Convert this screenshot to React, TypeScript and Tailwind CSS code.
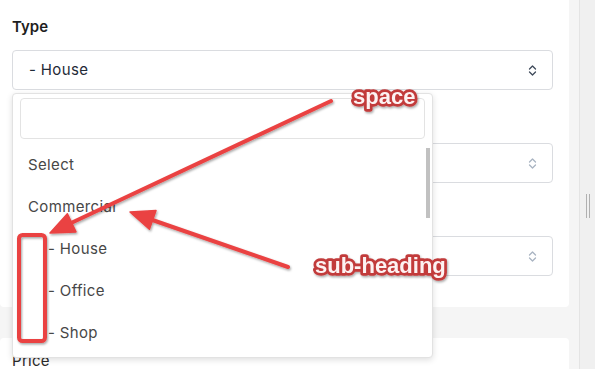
import React from "react";

const Chevrons = ({ color }: { color: string }) => (
  <svg width="9" height="13" viewBox="0 0 9 13" fill="none" stroke={color} strokeWidth="1.3" strokeLinecap="round" strokeLinejoin="round">
    <path d="M1.5 5 L4.5 2 L7.5 5" />
    <path d="M1.5 8 L4.5 11 L7.5 8" />
  </svg>
);

const SelectBox = ({ value, color }: { value: string; color: string }) => (
  <div className="mt-3 h-10 border border-[#dadce0] rounded-[4px] flex items-center justify-between pl-4 pr-[15px] bg-white">
    <span className="text-[15px] text-[#1f2a37] tracking-[0.35px]">{value}</span>
    <Chevrons color={color} />
  </div>
);

const Label = ({ children }: { children: React.ReactNode }) => (
  <div className="h-[22px] leading-[22px] text-[15px] font-semibold text-[#1e1e1e]">{children}</div>
);

const options: { text: string; sub?: boolean }[] = [
  { text: "Select" },
  { text: "Commercial" },
  { text: "- House", sub: true },
  { text: "- Office", sub: true },
  { text: "- Shop", sub: true },
  { text: "Residential" },
];

export default function App() {
  return (
    <div className="relative w-[595px] h-[369px] overflow-hidden bg-[#f5f5f5] flex font-['Inter',sans-serif]">
      <div className="w-[569px] flex flex-col">
        <div className="bg-white rounded-b-[4px] pt-4 pl-3 pr-4 pb-[31px]">
          <div className="relative">
            <Label>Type</Label>
            <SelectBox value="- House" color="#3f4a5a" />
            <div className="absolute z-10 left-0 top-[calc(100%+3px)] w-[421px] h-[265px] bg-white border border-[#e2e2e2] rounded-[4px] shadow-[0_2px_6px_rgba(0,0,0,0.13)] overflow-hidden">
              <div className="pt-1 px-[7px]">
                <div className="h-[41px] border border-[#e3e3e3] rounded-[4px] bg-white" />
              </div>
              <div className="mt-[5px]">
                {options.map((o) => (
                  <div
                    key={o.text}
                    className={
                      "h-[42px] flex items-center text-[15px] text-[#474747] tracking-[0.35px] " +
                      (o.sub ? "pl-[35px]" : "pl-[15px]")
                    }
                  >
                    {o.text}
                  </div>
                ))}
              </div>
              <div className="absolute left-[413px] top-[54px] w-[4px] h-[70px] bg-[#c1c1c1]" />
            </div>
          </div>
          <div className="mt-[19px]">
            <Label>Status</Label>
            <SelectBox value="Select" color="#a9b4c2" />
          </div>
          <div className="mt-[19px]">
            <Label>Location</Label>
            <SelectBox value="Select" color="#a9b4c2" />
          </div>
        </div>
        <div className="mt-[31px] flex-1 bg-white rounded-t-[4px] pt-3 px-3">
          <div className="h-[22px] leading-[22px] text-[15px] font-normal text-[#2a2a2a] tracking-[0.3px]">Price</div>
        </div>
      </div>
      <div className="w-[10px] bg-[#f5f5f5]" />
      <div className="flex-1 bg-[#f0f0f0] border-l border-[#e4e4e4] flex justify-center">
        <div className="mt-[194px] h-[24px] flex gap-[2px]">
          <div className="w-[1px] h-full bg-[#b0b0b0]" />
          <div className="w-[1px] h-full bg-[#b0b0b0]" />
        </div>
      </div>

      <svg className="absolute inset-0 z-20 pointer-events-none" width="595" height="369" viewBox="0 0 595 369">
        <defs>
          <filter id="sh" x="-10%" y="-10%" width="120%" height="130%">
            <feDropShadow dx="1" dy="1.5" stdDeviation="0.8" floodColor="#000" floodOpacity="0.35" />
          </filter>
        </defs>
        <g filter="url(#sh)">
          <line x1="331" y1="101" x2="70" y2="223.5" stroke="#ea4343" strokeWidth="4" strokeLinecap="round" />
          <polygon points="50,233 76,231.9 67.4,213.7" fill="#ea4343" stroke="#ea4343" strokeWidth="1.5" strokeLinejoin="round" />
          <line x1="288" y1="267" x2="151" y2="219.5" stroke="#ea4343" strokeWidth="4" strokeLinecap="round" />
          <polygon points="130,212 156,210.5 149.4,229.3" fill="#ea4343" stroke="#ea4343" strokeWidth="1.5" strokeLinejoin="round" />
          <rect x="19" y="235" width="26" height="106" rx="3.5" fill="none" stroke="#ea4343" strokeWidth="4" />
        </g>
        <g filter="url(#sh)" fontFamily="'Liberation Sans', Arial, sans-serif" fontWeight="700" fontSize="22">
          <text x="353" y="104" fill="#fdf2f2" stroke="#c23b3b" strokeWidth="5.5" strokeLinejoin="round" style={{ paintOrder: "stroke" }}>
            space
          </text>
          <text x="315" y="273" fill="#fdf2f2" stroke="#c23b3b" strokeWidth="5.5" strokeLinejoin="round" style={{ paintOrder: "stroke" }}>
            sub-heading
          </text>
        </g>
      </svg>
    </div>
  );
}
